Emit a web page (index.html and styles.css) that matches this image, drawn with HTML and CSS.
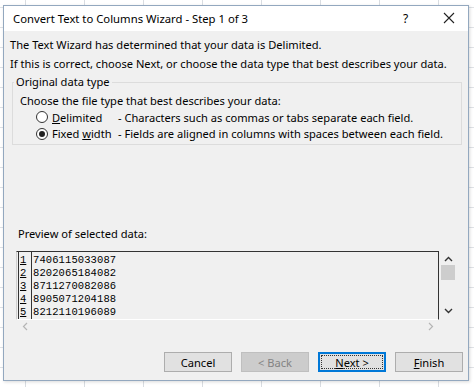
FILE: index.html
```html
<!DOCTYPE html>
<html>
<head>
<meta charset="utf-8">
<link rel="stylesheet" href="styles.css">
</head>
<body>
<div class="dialog">
  <div class="titlebar">
    <span class="title">Convert Text to Columns Wizard - Step 1 of 3</span>
    <span class="help">?</span>
    <svg class="close" width="12" height="12" viewBox="0 0 12 12"><path d="M1 1L11 11M11 1L1 11" stroke="#222" stroke-width="1.1" fill="none"/></svg>
  </div>
  <div class="content">
    <p class="line">The Text Wizard has determined that your data is Delimited.</p>
    <p class="line">If this is correct, choose Next, or choose the data type that best describes your data.</p>
    <fieldset class="group">
      <legend class="legend">Original data type</legend>
      <div class="group-inner">
        <div class="choose">Choose the file type that best describes your data:</div>
        <div class="radio-row first">
          <span class="radio"></span>
          <span class="rlabel"><u>D</u>elimited</span>
          <span class="rdesc">- Characters such as commas or tabs separate each field.</span>
        </div>
        <div class="radio-row second">
          <span class="radio checked"></span>
          <span class="rlabel">Fixed <u>w</u>idth</span>
          <span class="rdesc">- Fields are aligned in columns with spaces between each field.</span>
        </div>
      </div>
    </fieldset>
    <div class="preview-label">Preview of selected data:</div>
    <div class="preview">
      <div class="preview-main">
        <div class="grid">
          <div class="nums">
            <div class="num"><u>1</u></div>
            <div class="num"><u>2</u></div>
            <div class="num"><u>3</u></div>
            <div class="num"><u>4</u></div>
            <div class="num"><u>5</u></div>
          </div>
          <div class="data">
            <div class="row">7406115033087</div>
            <div class="row">8202065184082</div>
            <div class="row">8711270082086</div>
            <div class="row">8905071204188</div>
            <div class="row">8212110196089</div>
          </div>
        </div>
        <div class="hscroll">
          <svg width="6" height="9" viewBox="0 0 6 9"><path d="M5 1L1.5 4.5L5 8" stroke="#b5b5b5" stroke-width="1.2" fill="none"/></svg>
          <svg width="6" height="9" viewBox="0 0 6 9"><path d="M1 1L4.5 4.5L1 8" stroke="#b5b5b5" stroke-width="1.2" fill="none"/></svg>
        </div>
      </div>
      <div class="vscroll">
        <svg class="vup" width="9" height="6" viewBox="0 0 9 6"><path d="M1 5L4.5 1.5L8 5" stroke="#333" stroke-width="1.4" fill="none"/></svg>
        <div class="thumb"></div>
        <svg class="vdown" width="9" height="6" viewBox="0 0 9 6"><path d="M1 1L4.5 4.5L8 1" stroke="#333" stroke-width="1.4" fill="none"/></svg>
      </div>
    </div>
    <div class="buttons">
      <button class="btn">Cancel</button>
      <button class="btn disabled">&lt; Back</button>
      <button class="btn default"><span class="focus"><u>N</u>ext &gt;</span></button>
      <button class="btn"><u>F</u>inish</button>
    </div>
  </div>
</div>
</body>
</html>
```
FILE: styles.css
```css
* { box-sizing: border-box; }
html, body { margin: 0; padding: 0; }
body {
  width: 474px;
  height: 387px;
  overflow: hidden;
  background-color: #ffffff;
  background-image:
    repeating-linear-gradient(90deg, transparent 0, transparent 25px, #d9dde2 25px, #d9dde2 26px, transparent 26px, transparent 59px),
    repeating-linear-gradient(180deg, transparent 0, transparent 7px, #dfe2e6 7px, #dfe2e6 8px, transparent 8px, transparent 20px);
  font-family: "Noto Sans", "Open Sans", sans-serif;
  font-size: 11.1px;
  color: #000;
  padding: 5px 0 0 3px;
}
.dialog {
  width: 466px;
  height: 376px;
  border: 1px solid #93a8bf;
  background: #f0f0f0;
  box-shadow: 1px 1px 3px rgba(0,0,0,0.15);
  display: flex;
  flex-direction: column;
}
.titlebar {
  height: 25px;
  background: #fff;
  display: flex;
  align-items: center;
  padding: 0 0 1px 9px;
  font-size: 11.3px;
}
.title { flex: 1; }
.help { width: 12px; margin-right: 28px; font-size: 12px; }
.close { margin-right: 13px; }
.content {
  flex: 1;
  display: flex;
  flex-direction: column;
  padding: 4px 5px 0 6px;
}
.line { margin: 0; line-height: 19px; height: 19px; }
.group {
  margin: 0 1px 0 2px;
  padding: 0;
  border: 1px solid #dcdcdc;
  min-width: 0;
}
.legend {
  margin-left: 1px;
  padding: 0 2px;
  line-height: 18px;
}
.group-inner { padding: 0 0 2px 7px; }
.choose { line-height: 17px; height: 17px; margin-top: 1px; }
.radio-row {
  display: flex;
  align-items: center;
  padding-left: 16px;
}
.radio-row.first { height: 16px; }
.radio-row.second { height: 17px; }
.radio {
  width: 12px;
  height: 12px;
  border: 1px solid #333;
  border-radius: 50%;
  background: #fff;
  display: flex;
  align-items: center;
  justify-content: center;
  margin-right: 4px;
}
.radio.checked::after {
  content: "";
  width: 6px;
  height: 6px;
  border-radius: 50%;
  background: #222;
}
.rlabel { width: 66px; }
.preview-label {
  margin-top: 80px;
  line-height: 18px;
  height: 18px;
  padding-left: 8px;
}
.preview {
  margin-top: 8px;
  margin-left: 6px;
  display: flex;
  height: 84px;
}
.preview-main {
  width: 423px;
  display: flex;
  flex-direction: column;
}
.grid {
  height: 69px;
  border-top: 1.5px solid #333;
  border-right: 1.5px solid #333;
  border-left: 1px solid #cfcfcf;
  border-bottom: 1px solid #fff;
  display: flex;
  overflow: hidden;
  padding-left: 1px;
}
.nums {
  width: 14px;
  border-left: 1px solid #333;
  border-right: 1px solid #333;
  padding-top: 2px;
  font-family: "Liberation Mono", monospace;
  font-size: 10.5px;
}
.num { height: 13px; line-height: 13px; padding-left: 1px; }
.data {
  padding-top: 2px;
  font-family: "Liberation Mono", monospace;
  font-size: 10.5px;
  letter-spacing: 0.1px;
}
.row { height: 13px; line-height: 13px; padding-left: 1px; }
.hscroll {
  flex: 1;
  display: flex;
  justify-content: space-between;
  align-items: center;
  padding: 0 5px 3px 6px;
}
.vscroll {
  width: 17px;
  height: 69px;
  display: flex;
  flex-direction: column;
  align-items: center;
  padding-top: 5px;
}
.vup { margin-left: 1px; }
.thumb {
  width: 14px;
  height: 15px;
  background: #cdcdcd;
  margin-top: 3px;
}
.vdown { margin-top: 28px; margin-left: 1px; }
.buttons {
  display: flex;
  justify-content: flex-end;
  gap: 9px;
  margin-top: 17px;
}
.btn {
  width: 68px;
  height: 20px;
  border: 1px solid #adadad;
  background: #e1e1e1;
  font-family: "Noto Sans", "Open Sans", sans-serif;
  font-size: 11.1px;
  color: #000;
  padding: 0;
  display: flex;
  align-items: center;
  justify-content: center;
}
.btn.disabled {
  background: #cccccc;
  border-color: #bfbfbf;
  color: #838383;
}
.btn.default {
  border: 1px solid #0078d7;
  box-shadow: inset 0 0 0 1px #0078d7;
  padding: 2px;
}
.focus {
  width: 100%;
  height: 100%;
  border: 1px dotted #333;
  display: flex;
  align-items: center;
  justify-content: center;
}
```
